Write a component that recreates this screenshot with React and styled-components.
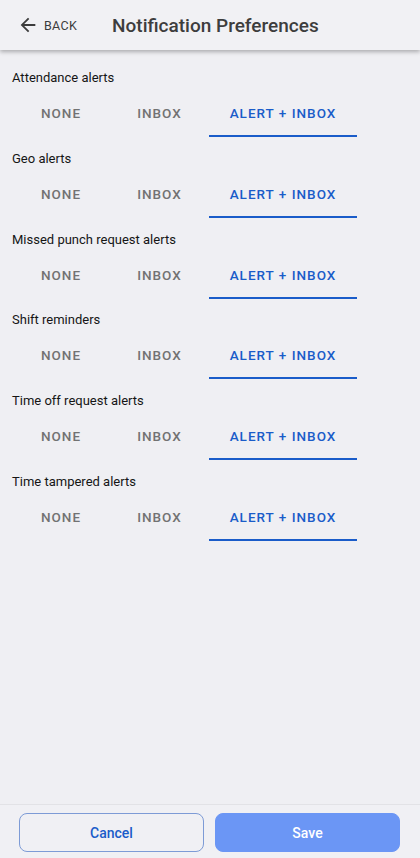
import React, {useState} from 'react';
import styled, {createGlobalStyle} from 'styled-components';

const GlobalStyle = createGlobalStyle`
  html, body {
    margin: 0;
    padding: 0;
    background: #efeff3;
    font-family: Roboto, "Liberation Sans", sans-serif;
  }
  #root { height: 100vh; }
`

const Page = styled.div`
  height: 858px;
  display: flex;
  flex-direction: column;
  background: #efeff3;
`

const Header = styled.header`
  height: 50px;
  flex-shrink: 0;
  display: flex;
  align-items: center;
  background: #f1f1f4;
  box-shadow: 0 2px 4px rgba(0,0,0,0.28);
  position: relative;
  z-index: 1;
`

const BackButton = styled.button`
  display: flex;
  align-items: center;
  gap: 5px;
  margin-left: 17px;
  padding: 0;
  border: none;
  background: none;
  font-family: inherit;
  font-size: 12.5px;
  font-weight: 400;
  color: #3c3c3c;
  letter-spacing: 0.3px;
  cursor: pointer;
`

const Title = styled.h1`
  margin: 0 0 0 35px;
  font-size: 19px;
  font-weight: 500;
  color: #3d3d3d;
`

const Content = styled.main`
  flex: 1;
  padding: 6.3px 12px 0;
`

const Section = styled.section`
  padding-top: 12.8px;
`

const Label = styled.div`
  font-size: 13px;
  line-height: 18px;
  color: #151515;
  margin-bottom: 2px;
`

const TabRow = styled.div`
  display: flex;
  height: 48px;
`

const Tab = styled.button`
  width: ${p => p.w}px;
  border: none;
  background: none;
  padding: 0;
  font-family: inherit;
  font-size: 13.5px;
  font-weight: 500;
  letter-spacing: 1px;
  color: ${p => p.active ? '#1a5cc9' : '#727272'};
  border-bottom: 2px solid ${p => p.active ? '#1a5cc9' : 'transparent'};
  padding-top: 2px;
  cursor: pointer;
`

const Footer = styled.footer`
  flex-shrink: 0;
  display: flex;
  gap: 11px;
  padding: 8px 20px 6px 19px;
  border-top: 1px solid #e2e2e6;
  background: #f0f0f4;
`

const FooterButton = styled.button`
  flex: 1;
  height: 39px;
  border-radius: 8px;
  font-family: inherit;
  font-size: 14px;
  font-weight: 500;
  color: ${p => p.primary ? '#ffffff' : '#1a5cc9'};
  background: ${p => p.primary ? '#6b96f5' : 'transparent'};
  border: 1px solid ${p => p.primary ? '#6b96f5' : '#7d9bd6'};
  cursor: pointer;
`

const categories = [
  'Attendance alerts',
  'Geo alerts',
  'Missed punch request alerts',
  'Shift reminders',
  'Time off request alerts',
  'Time tampered alerts',
]

const options = [
  {label: 'NONE', w: 98},
  {label: 'INBOX', w: 99},
  {label: 'ALERT + INBOX', w: 148},
]

function BackArrow(){
  return (
    <svg width="22" height="22" viewBox="0 0 24 24">
      <path d="M20 11H7.83l5.59-5.59L12 4l-8 8 8 8 1.41-1.41L7.83 13H20v-2z" fill="#3c3c3c"/>
    </svg>
  )
}

export default function App(){
  const [prefs, setPrefs] = useState(categories.map(() => 2));
  return (
    <Page>
      <GlobalStyle/>
      <Header>
        <BackButton><BackArrow/>BACK</BackButton>
        <Title>Notification Preferences</Title>
      </Header>
      <Content>
        {categories.map((cat, i) =>
          <Section key={cat}>
            <Label>{cat}</Label>
            <TabRow>
              {options.map((opt, j) =>
                <Tab key={opt.label} w={opt.w} active={prefs[i] === j}
                  onClick={() => setPrefs(prefs.map((v, k) => k === i ? j : v))}>
                  {opt.label}
                </Tab>
              )}
            </TabRow>
          </Section>
        )}
      </Content>
      <Footer>
        <FooterButton>Cancel</FooterButton>
        <FooterButton primary>Save</FooterButton>
      </Footer>
    </Page>
  );
}
